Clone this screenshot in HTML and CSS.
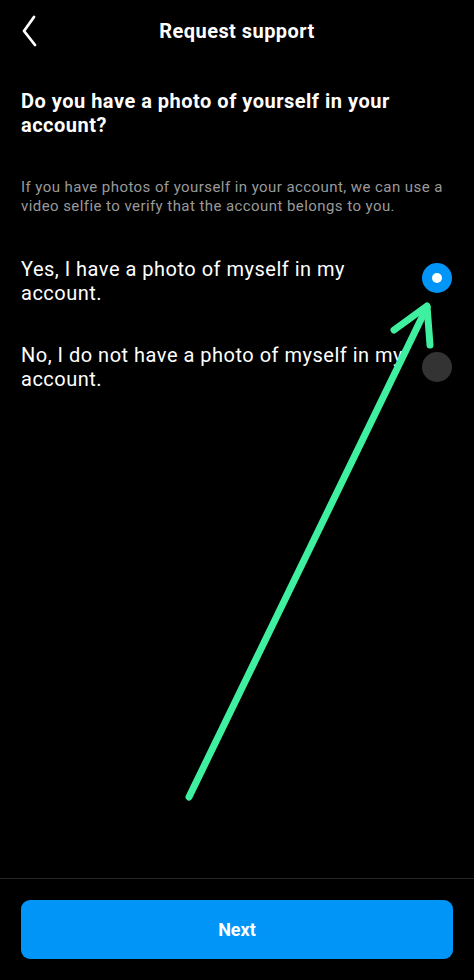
FILE: index.html
```html
<!DOCTYPE html>
<html lang="en">
<head>
<meta charset="utf-8">
<title>Request support</title>
<link rel="stylesheet" href="styles.css">
</head>
<body>
<div class="page">
  <header class="header">
    <svg class="back" width="20" height="34" viewBox="0 0 20 34" aria-hidden="true">
      <path d="M14 2 L4 16 L15 30" fill="none" stroke="#fff" stroke-width="2.8" stroke-linecap="round" stroke-linejoin="round"/>
    </svg>
    <h1 class="title">Request support</h1>
  </header>
  <main class="content">
    <h2 class="question">Do you have a photo of yourself in your account?</h2>
    <p class="hint">If you have photos of yourself in your account, we can use a video selfie to verify that the account belongs to you.</p>
    <div class="options">
      <div class="option">
        <span class="option-text">Yes, I have a photo of myself in my account.</span>
        <span class="radio radio-on"></span>
      </div>
      <div class="option">
        <span class="option-text">No, I do not have a photo of myself in my account.</span>
        <span class="radio radio-off"></span>
      </div>
    </div>
  </main>
  <footer class="footer">
    <button class="next">Next</button>
  </footer>
</div>
<svg class="annotation" viewBox="0 0 474 980" width="474" height="980" aria-hidden="true">
  <g fill="none" stroke="#3ef0a0" stroke-width="7" stroke-linecap="round" stroke-linejoin="round">
    <path d="M189 797 L427 307"/>
    <path d="M394 330 L427 306 L430 345"/>
  </g>
</svg>
</body>
</html>
```
FILE: styles.css
```css
* { box-sizing: border-box; }
html, body {
  margin: 0;
  padding: 0;
  background: #000;
}
body {
  position: relative;
  font-family: Roboto, "Liberation Sans", sans-serif;
  color: #fff;
}
.page {
  min-height: 980px;
  display: flex;
  flex-direction: column;
}
.header {
  position: relative;
  height: 62px;
  display: flex;
  align-items: center;
  justify-content: center;
}
.back {
  position: absolute;
  left: 20px;
  top: 15px;
}
.title {
  margin: 0;
  font-size: 20px;
  font-weight: 700;
  line-height: 24px;
  letter-spacing: 0.45px;
}
.content {
  flex: 1;
  padding: 0 22px 0 21px;
}
.question {
  margin: 27px 0 0;
  font-size: 20px;
  font-weight: 700;
  line-height: 24px;
  letter-spacing: 0.5px;
}
.hint {
  margin: 41px 0 0;
  font-size: 15px;
  line-height: 19px;
  letter-spacing: 0.43px;
  color: #9a9a9a;
}
.options {
  margin-top: 41px;
  display: flex;
  flex-direction: column;
  gap: 38px;
}
.option {
  display: flex;
  align-items: center;
  gap: 8px;
}
.option-text {
  flex: 1;
  font-size: 20px;
  line-height: 24px;
  letter-spacing: 0.5px;
}
.radio {
  width: 30px;
  height: 30px;
  border-radius: 50%;
  flex: none;
}
.radio-on {
  margin-top: -6px;
  background: #0095f6;
  display: flex;
  align-items: center;
  justify-content: center;
}
.radio-on::after {
  content: "";
  width: 10px;
  height: 10px;
  border-radius: 50%;
  background: #fff;
}
.radio-off {
  background: #333;
}
.footer {
  border-top: 1px solid #262626;
  padding: 21px;
}
.next {
  display: block;
  width: 100%;
  height: 59px;
  border: 0;
  border-radius: 9px;
  background: #0095f6;
  color: #fff;
  font-family: Roboto, "Liberation Sans", sans-serif;
  font-size: 18px;
  font-weight: 700;
}
.annotation {
  position: absolute;
  left: 0;
  top: 0;
  pointer-events: none;
}
```
